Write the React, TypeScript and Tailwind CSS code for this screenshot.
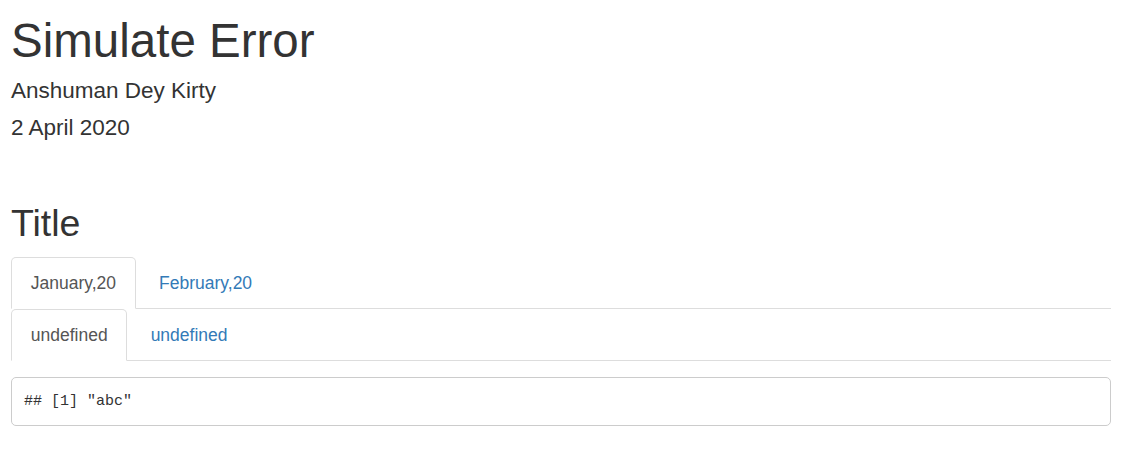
export default function App() {
  const sans = { fontFamily: '"Liberation Sans", Arial, Helvetica, sans-serif' };

  return (
    <div
      className="min-h-screen bg-white pl-[11px] pr-[26px] text-[#333]"
      style={sans}
    >
      {/* header */}
      <h1 className="mt-[15px] text-[47.5px] leading-[52px] font-normal">
        Simulate Error
      </h1>
      <h4 className="mt-[11px] text-[22.5px] leading-[25px] font-normal">
        Anshuman Dey Kirty
      </h4>
      <h4 className="mt-[12px] text-[22.5px] leading-[25px] font-normal">
        2 April 2020
      </h4>

      {/* section */}
      <h2 className="mt-[63px] text-[37.5px] leading-[41px] font-normal">
        Title
      </h2>

      {/* outer tabs */}
      <div className="mt-[13px] flex border-b border-[#ddd]">
        <div className="-mb-px mr-[3.5px] rounded-t-[5px] border border-[#ddd] border-b-transparent bg-white px-[18.75px] py-[12.5px] text-[17.5px] leading-[25px] text-[#555]">
          January,20
        </div>
        <div className="-mb-px mr-[3.5px] rounded-t-[5px] border border-transparent px-[18.75px] py-[12.5px] text-[17.5px] leading-[25px] text-[#337ab7]">
          February,20
        </div>
      </div>

      {/* inner tabs */}
      <div className="flex border-b border-[#ddd]">
        <div className="-mb-px mr-[3.5px] rounded-t-[5px] border border-[#ddd] border-b-transparent bg-white px-[18.75px] py-[12.5px] text-[17.5px] leading-[25px] text-[#555]">
          undefined
        </div>
        <div className="-mb-px mr-[3.5px] rounded-t-[5px] border border-transparent px-[18.75px] py-[12.5px] text-[17.5px] leading-[25px] text-[#337ab7]">
          undefined
        </div>
      </div>

      {/* output chunk */}
      <pre
        className="mt-[16px] rounded-[5px] border border-[#ccc] bg-white px-[12px] py-[12px] text-[15px] leading-[23px] text-[#333]"
        style={{ fontFamily: '"Liberation Mono", "DejaVu Sans Mono", monospace' }}
      >
        ## [1] "abc"
      </pre>
    </div>
  );
}
